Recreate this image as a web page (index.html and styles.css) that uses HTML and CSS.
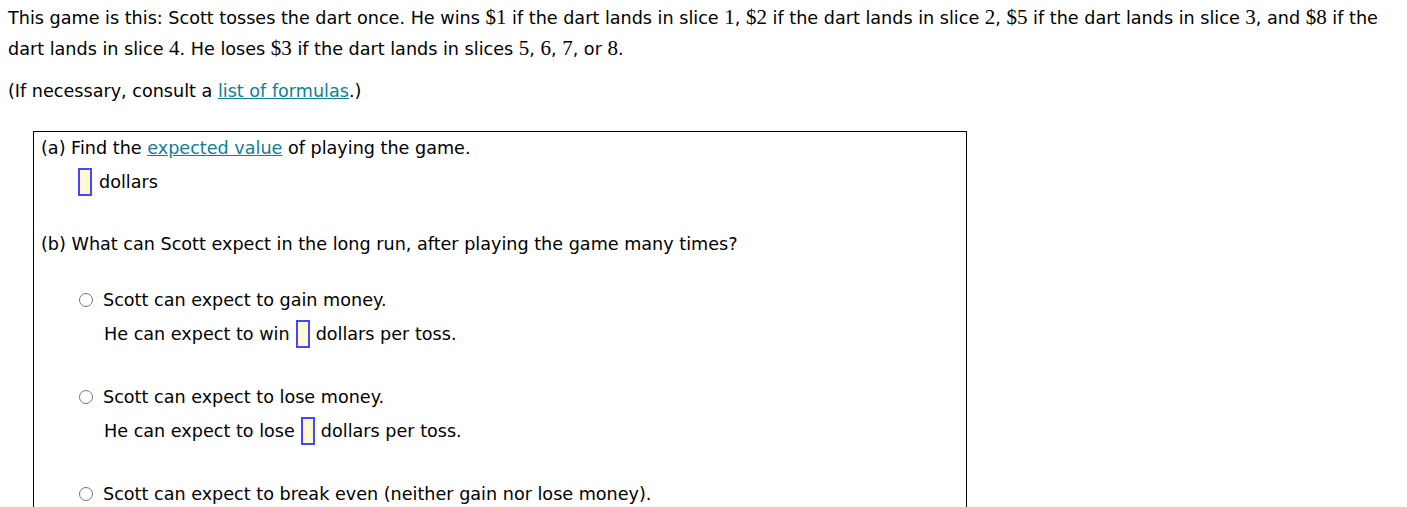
FILE: index.html
```html
<!DOCTYPE html>
<html lang="en">
<head>
  <meta charset="UTF-8" />
  <title>Expected value - dart game</title>
  <link rel="stylesheet" href="styles.css">
</head>
<body>

  <p class="intro">
    This game is this: Scott tosses the dart once. He wins <span class="m">$1</span> if the dart lands in slice <span class="m">1</span>, <span class="m">$2</span> if the dart lands in slice <span class="m">2</span>, <span class="m">$5</span> if the dart lands in slice <span class="m">3</span>, and <span class="m">$8</span> if the dart lands in slice <span class="m">4</span>. He loses <span class="m">$3</span> if the dart lands in slices <span class="m">5</span>, <span class="m">6</span>, <span class="m">7</span>, or <span class="m">8</span>.
  </p>

  <p class="note">(If necessary, consult a <a href="#">list of formulas</a>.)</p>

  <div class="question">
    <div class="part">
      <div>(a) Find the <a href="#">expected value</a> of playing the game.</div>
      <div class="answer"><input type="text" class="blank" /> dollars</div>
    </div>

    <div class="part part-b">
      <div>(b) What can Scott expect in the long run, after playing the game many times?</div>

      <div class="options">
        <div class="option">
          <label class="choice"><input type="radio" name="run" /> Scott can expect to gain money.</label>
          <div class="follow">He can expect to win <input type="text" class="blank" /> dollars per toss.</div>
        </div>
        <div class="option">
          <label class="choice"><input type="radio" name="run" /> Scott can expect to lose money.</label>
          <div class="follow">He can expect to lose <input type="text" class="blank" /> dollars per toss.</div>
        </div>
        <div class="option">
          <label class="choice"><input type="radio" name="run" /> Scott can expect to break even (neither gain nor lose money).</label>
        </div>
      </div>
    </div>
  </div>

</body>
</html>
```

FILE: styles.css
```css
* {
  box-sizing: border-box;
}

body {
  margin: 0;
  padding: 2px 8px 0;
  font-family: 'DejaVu Sans', Verdana, sans-serif;
  font-size: 17.6px;
  color: #000;
  background: #fff;
  overflow: hidden;
}

p {
  margin: 0;
}

a {
  color: #0f7f93;
  text-decoration: underline;
}

.intro {
  line-height: 30px;
}

/* numbers typeset like math */
.m {
  font-family: 'Liberation Serif', 'DejaVu Serif', serif;
  font-size: 21px;
}

.note {
  margin-top: 12px;
  line-height: 30px;
}

.question {
  margin: 25px 0 0 25px;
  width: 934px;
  height: 400px;
  border: 1px solid #000;
  padding: 4px 7px;
  line-height: 24px;
}

.answer {
  margin: 8px 0 0 37px;
  display: flex;
  align-items: center;
  gap: 7px;
}

.blank {
  width: 14px;
  height: 28px;
  padding: 0;
  border: 2px solid #4646ff;
  background: #fff8d2;
  vertical-align: middle;
}

.part-b {
  margin-top: 36px;
}

.options {
  margin: 32px 0 0 38px;
}

.option {
  margin-bottom: 37px;
}

.choice {
  display: flex;
  align-items: center;
  gap: 10px;
}

.choice input {
  margin: 0;
  width: 14px;
  height: 14px;
}

.follow {
  margin: 8px 0 0 25px;
  display: flex;
  align-items: center;
  gap: 6px;
}
```
